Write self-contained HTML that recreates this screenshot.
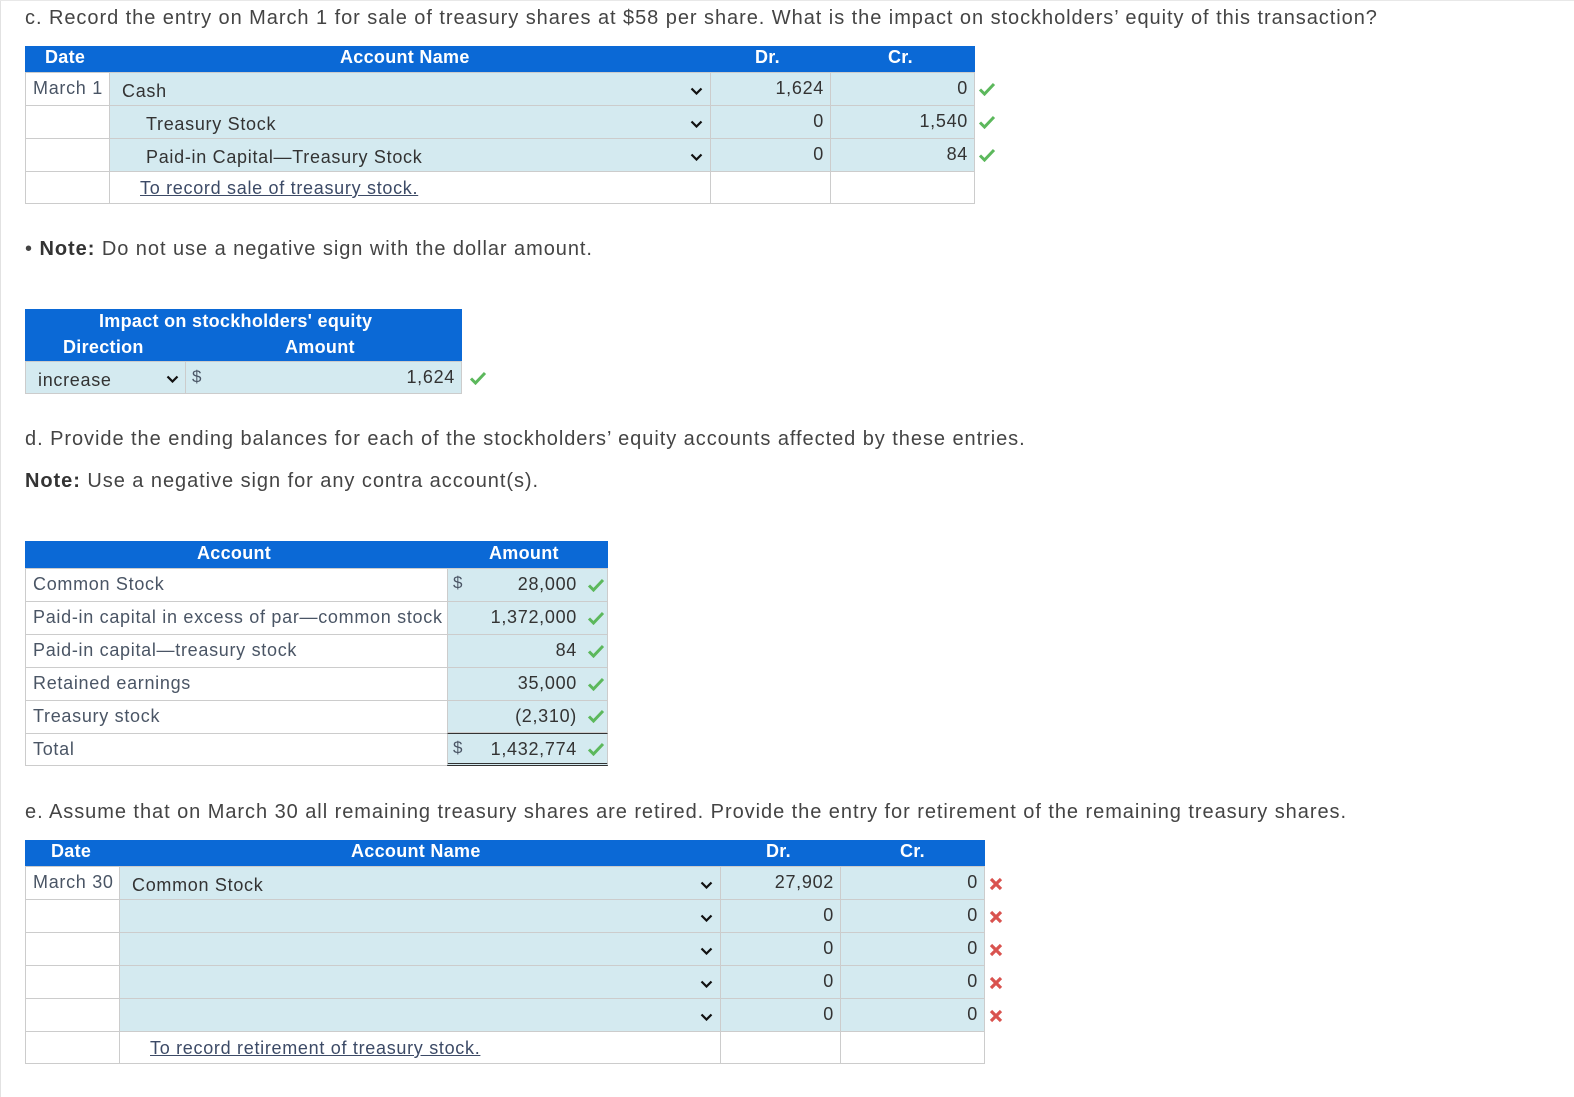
<!DOCTYPE html>
<html><head><meta charset="utf-8"><style>
body{margin:0;width:1574px;height:1097px;background:#fff;font-family:"Liberation Sans",Arial,sans-serif;color:#444;position:relative;overflow:hidden}
.a{position:absolute;white-space:nowrap}
.p{font-size:20px;letter-spacing:0.95px;color:#444}
.c{position:absolute;box-sizing:border-box;border:1px solid #ccc;font-size:18px;letter-spacing:0.7px;line-height:31px;white-space:nowrap;overflow:visible}
.b{background:#d4eaf0}
.h{position:absolute;background:#0b69d6;color:#fff;font-weight:bold;font-size:18px;letter-spacing:0.3px;white-space:nowrap}
.r{text-align:right;padding-right:6px;color:#333}
.chev{position:absolute;width:13px;height:8px}
.ok{position:absolute;width:18px;height:14px}
.lnk{color:#3c4a66;text-decoration:underline}
</style></head><body>
<div class="a" style="left:0;top:0;width:1px;height:1097px;background:#e2e2e2"></div>
<div class="a" style="left:0;top:0;width:1574px;height:1px;background:#e8e8e8"></div>

<div class="a p" style="left:25px;top:7px">c. Record the entry on March 1 for sale of treasury shares at $58 per share. What is the impact on stockholders’ equity of this transaction?</div>

<div class="h" style="left:25px;top:46px;width:950px;height:26px"></div>
<div class="h" style="left:45px;top:47px;background:none">Date</div>
<div class="h" style="left:340px;top:47px;background:none">Account Name</div>
<div class="h" style="left:755px;top:47px;background:none">Dr.</div>
<div class="h" style="left:888px;top:47px;background:none">Cr.</div>

<div class="c" style="left:25px;top:72px;width:85px;height:34px;padding-left:7px;line-height:31px;color:#4a5565">March 1</div>
<div class="c b" style="left:109px;top:72px;width:602px;height:34px;padding-left:12px;line-height:37px;color:#333">Cash</div>
<div class="c b r" style="left:710px;top:72px;width:121px;height:34px">1,624</div>
<div class="c b r" style="left:830px;top:72px;width:145px;height:34px">0</div>

<div class="c" style="left:25px;top:105px;width:85px;height:34px"></div>
<div class="c b" style="left:109px;top:105px;width:602px;height:34px;padding-left:36px;line-height:37px;color:#333">Treasury Stock</div>
<div class="c b r" style="left:710px;top:105px;width:121px;height:34px">0</div>
<div class="c b r" style="left:830px;top:105px;width:145px;height:34px">1,540</div>

<div class="c" style="left:25px;top:138px;width:85px;height:34px"></div>
<div class="c b" style="left:109px;top:138px;width:602px;height:34px;padding-left:36px;line-height:37px;color:#333">Paid-in Capital—Treasury Stock</div>
<div class="c b r" style="left:710px;top:138px;width:121px;height:34px">0</div>
<div class="c b r" style="left:830px;top:138px;width:145px;height:34px">84</div>

<div class="c" style="left:25px;top:171px;width:85px;height:33px"></div>
<div class="c" style="left:109px;top:171px;width:602px;height:33px;padding-left:30px;line-height:33px"><span class="lnk">To record sale of treasury stock.</span></div>
<div class="c" style="left:710px;top:171px;width:121px;height:33px"></div>
<div class="c" style="left:830px;top:171px;width:145px;height:33px"></div>

<svg class="chev" style="left:690px;top:87px" viewBox="0 0 13 8"><polyline points="1.5,1.5 6.5,6.5 11.5,1.5" fill="none" stroke="#111" stroke-width="2.2"/></svg>
<svg class="chev" style="left:690px;top:120px" viewBox="0 0 13 8"><polyline points="1.5,1.5 6.5,6.5 11.5,1.5" fill="none" stroke="#111" stroke-width="2.2"/></svg>
<svg class="chev" style="left:690px;top:153px" viewBox="0 0 13 8"><polyline points="1.5,1.5 6.5,6.5 11.5,1.5" fill="none" stroke="#111" stroke-width="2.2"/></svg>

<svg class="ok" style="left:978px;top:82px" viewBox="0 0 18 14"><polyline points="2,7.5 6.5,12 16,2" fill="none" stroke="#5cb85c" stroke-width="3"/></svg>
<svg class="ok" style="left:978px;top:115px" viewBox="0 0 18 14"><polyline points="2,7.5 6.5,12 16,2" fill="none" stroke="#5cb85c" stroke-width="3"/></svg>
<svg class="ok" style="left:978px;top:148px" viewBox="0 0 18 14"><polyline points="2,7.5 6.5,12 16,2" fill="none" stroke="#5cb85c" stroke-width="3"/></svg>

<div class="a p" style="left:25px;top:238px">• <b style="color:#333">Note:</b> Do not use a negative sign with the dollar amount.</div>

<div class="h" style="left:25px;top:309px;width:437px;height:52px"></div>
<div class="h" style="left:99px;top:311px;background:none">Impact on stockholders' equity</div>
<div class="h" style="left:63px;top:337px;background:none">Direction</div>
<div class="h" style="left:285px;top:337px;background:none">Amount</div>
<div class="c b" style="left:25px;top:361px;width:161px;height:33px;padding-left:12px;line-height:37px;color:#333">increase</div>
<svg class="chev" style="left:166px;top:375px" viewBox="0 0 13 8"><polyline points="1.5,1.5 6.5,6.5 11.5,1.5" fill="none" stroke="#111" stroke-width="2.2"/></svg>
<div class="c b r" style="left:185px;top:361px;width:277px;height:33px;line-height:31px">1,624</div>
<div class="a" style="left:192px;top:367px;font-size:17px;color:#4a5565">$</div>
<svg class="ok" style="left:469px;top:371px" viewBox="0 0 18 14"><polyline points="2,7.5 6.5,12 16,2" fill="none" stroke="#5cb85c" stroke-width="3"/></svg>

<div class="a p" style="left:25px;top:428px">d. Provide the ending balances for each of the stockholders’ equity accounts affected by these entries.</div>
<div class="a p" style="left:25px;top:470px"><b style="color:#333">Note:</b> Use a negative sign for any contra account(s).</div>

<div class="h" style="left:25px;top:541px;width:583px;height:27px"></div>
<div class="h" style="left:197px;top:543px;background:none">Account</div>
<div class="h" style="left:489px;top:543px;background:none">Amount</div>

<div class="c" style="left:25px;top:568px;width:423px;height:34px;padding-left:7px;color:#4a5565">Common Stock</div>
<div class="c b r" style="left:447px;top:568px;width:161px;height:34px;padding-right:30px">28,000</div>
<div class="c" style="left:25px;top:601px;width:423px;height:34px;padding-left:7px;color:#4a5565">Paid-in capital in excess of par—common stock</div>
<div class="c b r" style="left:447px;top:601px;width:161px;height:34px;padding-right:30px">1,372,000</div>
<div class="c" style="left:25px;top:634px;width:423px;height:34px;padding-left:7px;color:#4a5565">Paid-in capital—treasury stock</div>
<div class="c b r" style="left:447px;top:634px;width:161px;height:34px;padding-right:30px">84</div>
<div class="c" style="left:25px;top:667px;width:423px;height:34px;padding-left:7px;color:#4a5565">Retained earnings</div>
<div class="c b r" style="left:447px;top:667px;width:161px;height:34px;padding-right:30px">35,000</div>
<div class="c" style="left:25px;top:700px;width:423px;height:34px;padding-left:7px;color:#4a5565">Treasury stock</div>
<div class="c b r" style="left:447px;top:700px;width:161px;height:33px;padding-right:30px">(2,310)</div>
<div class="c" style="left:25px;top:733px;width:423px;height:33px;padding-left:7px;color:#4a5565">Total</div>
<div class="c b r" style="left:447px;top:733px;width:161px;height:33px;padding-right:30px;border-top:1px solid #333;border-bottom:3px double #333">1,432,774</div>
<div class="a" style="left:453px;top:573px;font-size:17px;color:#4a5565">$</div>
<div class="a" style="left:453px;top:738px;font-size:17px;color:#4a5565">$</div>
<svg class="ok" style="left:587px;top:578px" viewBox="0 0 18 14"><polyline points="2,7.5 6.5,12 16,2" fill="none" stroke="#5cb85c" stroke-width="3"/></svg>
<svg class="ok" style="left:587px;top:611px" viewBox="0 0 18 14"><polyline points="2,7.5 6.5,12 16,2" fill="none" stroke="#5cb85c" stroke-width="3"/></svg>
<svg class="ok" style="left:587px;top:644px" viewBox="0 0 18 14"><polyline points="2,7.5 6.5,12 16,2" fill="none" stroke="#5cb85c" stroke-width="3"/></svg>
<svg class="ok" style="left:587px;top:677px" viewBox="0 0 18 14"><polyline points="2,7.5 6.5,12 16,2" fill="none" stroke="#5cb85c" stroke-width="3"/></svg>
<svg class="ok" style="left:587px;top:709px" viewBox="0 0 18 14"><polyline points="2,7.5 6.5,12 16,2" fill="none" stroke="#5cb85c" stroke-width="3"/></svg>
<svg class="ok" style="left:587px;top:742px" viewBox="0 0 18 14"><polyline points="2,7.5 6.5,12 16,2" fill="none" stroke="#5cb85c" stroke-width="3"/></svg>

<div class="a p" style="left:25px;top:801px">e. Assume that on March 30 all remaining treasury shares are retired. Provide the entry for retirement of the remaining treasury shares.</div>

<div class="h" style="left:25px;top:840px;width:960px;height:26px"></div>
<div class="h" style="left:51px;top:841px;background:none">Date</div>
<div class="h" style="left:351px;top:841px;background:none">Account Name</div>
<div class="h" style="left:766px;top:841px;background:none">Dr.</div>
<div class="h" style="left:900px;top:841px;background:none">Cr.</div>

<div class="c" style="left:25px;top:866px;width:95px;height:34px;padding-left:7px;color:#4a5565">March 30</div>
<div class="c b" style="left:119px;top:866px;width:602px;height:34px;padding-left:12px;line-height:37px;color:#333">Common Stock</div>
<div class="c b r" style="left:720px;top:866px;width:121px;height:34px">27,902</div>
<div class="c b r" style="left:840px;top:866px;width:145px;height:34px">0</div>

<div class="c" style="left:25px;top:899px;width:95px;height:34px"></div>
<div class="c b" style="left:119px;top:899px;width:602px;height:34px"></div>
<div class="c b r" style="left:720px;top:899px;width:121px;height:34px">0</div>
<div class="c b r" style="left:840px;top:899px;width:145px;height:34px">0</div>

<div class="c" style="left:25px;top:932px;width:95px;height:34px"></div>
<div class="c b" style="left:119px;top:932px;width:602px;height:34px"></div>
<div class="c b r" style="left:720px;top:932px;width:121px;height:34px">0</div>
<div class="c b r" style="left:840px;top:932px;width:145px;height:34px">0</div>

<div class="c" style="left:25px;top:965px;width:95px;height:34px"></div>
<div class="c b" style="left:119px;top:965px;width:602px;height:34px"></div>
<div class="c b r" style="left:720px;top:965px;width:121px;height:34px">0</div>
<div class="c b r" style="left:840px;top:965px;width:145px;height:34px">0</div>

<div class="c" style="left:25px;top:998px;width:95px;height:34px"></div>
<div class="c b" style="left:119px;top:998px;width:602px;height:34px"></div>
<div class="c b r" style="left:720px;top:998px;width:121px;height:34px">0</div>
<div class="c b r" style="left:840px;top:998px;width:145px;height:34px">0</div>

<div class="c" style="left:25px;top:1031px;width:95px;height:33px"></div>
<div class="c" style="left:119px;top:1031px;width:602px;height:33px;padding-left:30px;line-height:33px"><span class="lnk">To record retirement of treasury stock.</span></div>
<div class="c" style="left:720px;top:1031px;width:121px;height:33px"></div>
<div class="c" style="left:840px;top:1031px;width:145px;height:33px"></div>

<svg class="chev" style="left:700px;top:881px" viewBox="0 0 13 8"><polyline points="1.5,1.5 6.5,6.5 11.5,1.5" fill="none" stroke="#111" stroke-width="2.2"/></svg>
<svg class="chev" style="left:700px;top:914px" viewBox="0 0 13 8"><polyline points="1.5,1.5 6.5,6.5 11.5,1.5" fill="none" stroke="#111" stroke-width="2.2"/></svg>
<svg class="chev" style="left:700px;top:947px" viewBox="0 0 13 8"><polyline points="1.5,1.5 6.5,6.5 11.5,1.5" fill="none" stroke="#111" stroke-width="2.2"/></svg>
<svg class="chev" style="left:700px;top:980px" viewBox="0 0 13 8"><polyline points="1.5,1.5 6.5,6.5 11.5,1.5" fill="none" stroke="#111" stroke-width="2.2"/></svg>
<svg class="chev" style="left:700px;top:1013px" viewBox="0 0 13 8"><polyline points="1.5,1.5 6.5,6.5 11.5,1.5" fill="none" stroke="#111" stroke-width="2.2"/></svg>

<svg class="ok" style="left:989px;top:877px;width:14px;height:14px" viewBox="0 0 14 14"><path d="M2,2 L12,12 M12,2 L2,12" stroke="#d9534f" stroke-width="3.2"/></svg>
<svg class="ok" style="left:989px;top:910px;width:14px;height:14px" viewBox="0 0 14 14"><path d="M2,2 L12,12 M12,2 L2,12" stroke="#d9534f" stroke-width="3.2"/></svg>
<svg class="ok" style="left:989px;top:943px;width:14px;height:14px" viewBox="0 0 14 14"><path d="M2,2 L12,12 M12,2 L2,12" stroke="#d9534f" stroke-width="3.2"/></svg>
<svg class="ok" style="left:989px;top:976px;width:14px;height:14px" viewBox="0 0 14 14"><path d="M2,2 L12,12 M12,2 L2,12" stroke="#d9534f" stroke-width="3.2"/></svg>
<svg class="ok" style="left:989px;top:1009px;width:14px;height:14px" viewBox="0 0 14 14"><path d="M2,2 L12,12 M12,2 L2,12" stroke="#d9534f" stroke-width="3.2"/></svg>
</body></html>
